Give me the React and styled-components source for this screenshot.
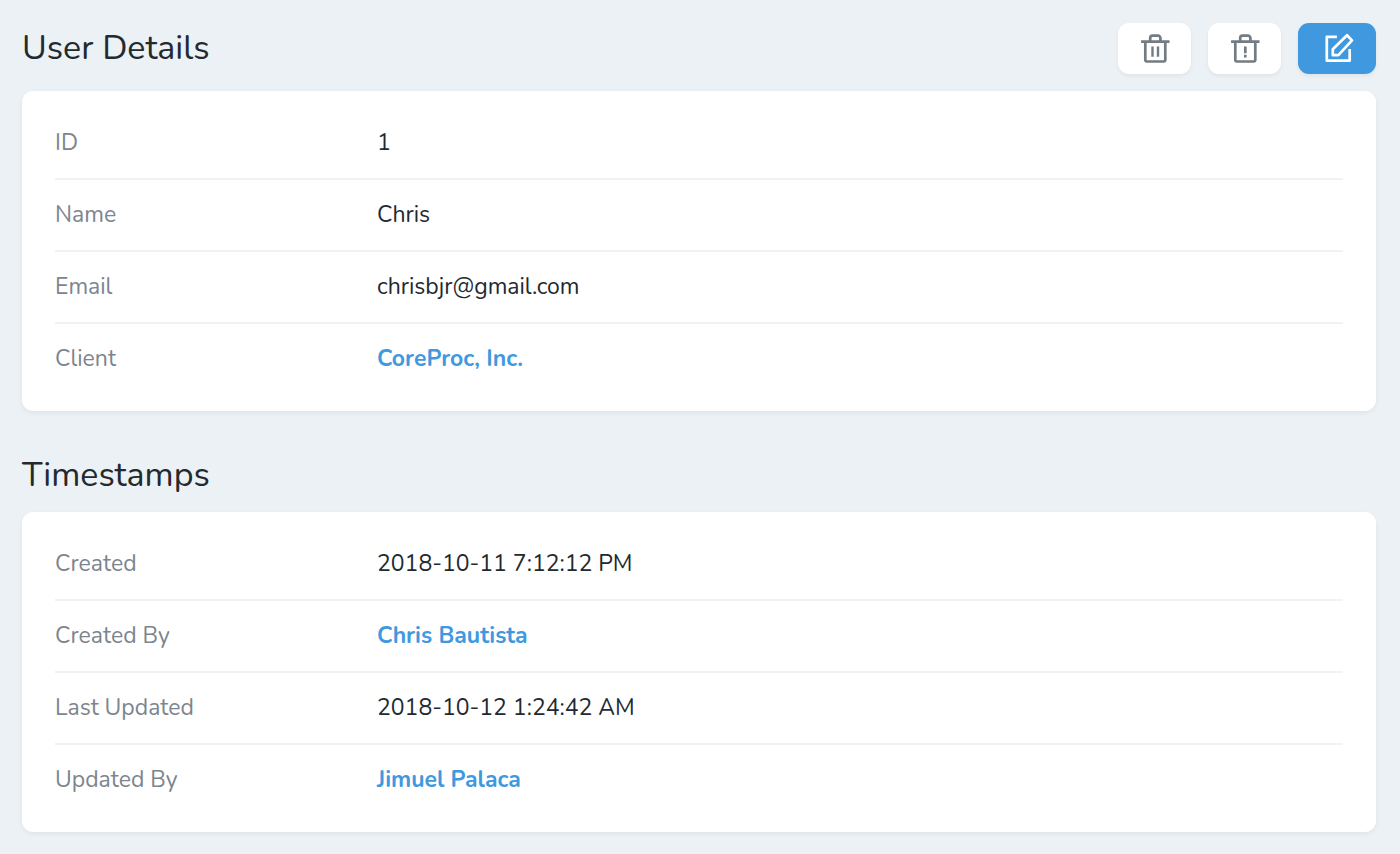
import React from 'react';
import styled, { createGlobalStyle } from 'styled-components';

const GlobalStyle = createGlobalStyle`
    *, *::before, *::after {
        box-sizing: border-box;
    }

    body {
        margin: 0;
        background-color: #ebf1f5;
        color: #22292f;
        font-family: Nunito, Lato, 'Liberation Sans', sans-serif;
        font-size: 23px;
        font-weight: 400;
        line-height: 32px;
    }
`;

const Page = styled.main`
    padding: 23px 24px 22px 22px;
`;

const Section = styled.section`
    & + & {
        margin-top: 39px;
    }
`;

const SectionHeader = styled.header`
    display: flex;
    align-items: flex-start;
    justify-content: space-between;
    margin-bottom: 12px;
`;

const Heading = styled.h1`
    margin: 0;
    font-size: 34px;
    font-weight: 400;
    line-height: 50px;
`;

const Toolbar = styled.div`
    display: flex;
    gap: 17px;
    margin-bottom: 5px;
`;

const IconButton = styled.button`
    display: flex;
    align-items: center;
    justify-content: center;
    width: ${props => props.$primary ? 78 : 73}px;
    height: 51px;
    padding: 0;
    border: none;
    border-radius: 11px;
    cursor: pointer;
    color: ${props => props.$primary ? '#ffffff' : '#737b83'};
    background-color: ${props => props.$primary ? '#4099de' : '#ffffff'};
    box-shadow: 0 2px 4px rgba(0, 0, 0, 0.06);
`;

const Icon = styled.svg`
    width: 30px;
    height: 30px;
    overflow: visible;
    fill: none;
    stroke: currentColor;
    stroke-width: 2.7;
    stroke-linejoin: round;
`;

const Card = styled.dl`
    margin: 0;
    padding: 17px 33px 15px;
    border-radius: 11px;
    background-color: #ffffff;
    box-shadow: 0 2px 5px rgba(0, 0, 0, 0.06);
`;

const Row = styled.div`
    display: flex;
    align-items: center;
    min-height: 72px;
    border-bottom: 2px solid #f0f2f4;

    &:last-child {
        border-bottom-color: transparent;
    }
`;

const Label = styled.dt`
    width: 25%;
    color: #7c858e;
`;

const Value = styled.dd`
    flex: 1;
    margin: 0;
`;

const ValueLink = styled.a`
    color: #4099de;
    font-weight: 700;
    text-decoration: none;
`;

const Trash = ({ children }) => (
    <Icon viewBox="0 0 30 30" aria-hidden="true">
        <path d="M1.1 7.7h28.4M10.2 7.5V4.1a2.4 2.4 0 0 1 2.4-2.4h5.4a2.4 2.4 0 0 1 2.4 2.4V7.5M5.3 7.7V26.1a1.4 1.4 0 0 0 1.4 1.4h17.2a1.4 1.4 0 0 0 1.4-1.4V7.7" />
        {children}
    </Icon>
);

const DeleteIcon = () => (
    <Trash>
        <path d="M12.5 12.4v10.4M18 12.4v10.4" strokeWidth="2.4" />
    </Trash>
);

const ForceDeleteIcon = () => (
    <Trash>
        <path d="M15.3 12.4v6.8M15.3 20.8v2.6" />
    </Trash>
);

const EditIcon = () => (
    <Icon viewBox="0 0 30 30" aria-hidden="true">
        <path d="M14.9 2.9H4.8v23.8h22.9V15" />
        <path d="M25 1.3l5 5.1L16.4 21.2H10.8v-6z" />
    </Icon>
);

const userFields = [
    { label: 'ID', value: '1' },
    { label: 'Name', value: 'Chris' },
    { label: 'Email', value: 'chrisbjr@gmail.com' },
    { label: 'Client', value: 'CoreProc, Inc.', href: '#client' },
];

const timestampFields = [
    { label: 'Created', value: '2018-10-11 7:12:12 PM' },
    { label: 'Created By', value: 'Chris Bautista', href: '#created-by' },
    { label: 'Last Updated', value: '2018-10-12 1:24:42 AM' },
    { label: 'Updated By', value: 'Jimuel Palaca', href: '#updated-by' },
];

const Panel = ({ title, fields, actions }) => (
    <Section>
        <SectionHeader>
            <Heading>{title}</Heading>
            {actions}
        </SectionHeader>
        <Card>
            {fields.map(({ label, value, href }) => (
                <Row key={label}>
                    <Label>{label}</Label>
                    <Value>
                        {href ? <ValueLink href={href}>{value}</ValueLink> : value}
                    </Value>
                </Row>
            ))}
        </Card>
    </Section>
);

const App = () => (
    <>
        <GlobalStyle />
        <Page>
            <Panel
                title="User Details"
                fields={userFields}
                actions={
                    <Toolbar>
                        <IconButton type="button" aria-label="Delete">
                            <DeleteIcon />
                        </IconButton>
                        <IconButton type="button" aria-label="Force delete">
                            <ForceDeleteIcon />
                        </IconButton>
                        <IconButton type="button" aria-label="Edit" $primary>
                            <EditIcon />
                        </IconButton>
                    </Toolbar>
                }
            />
            <Panel title="Timestamps" fields={timestampFields} />
        </Page>
    </>
);

export default App;
